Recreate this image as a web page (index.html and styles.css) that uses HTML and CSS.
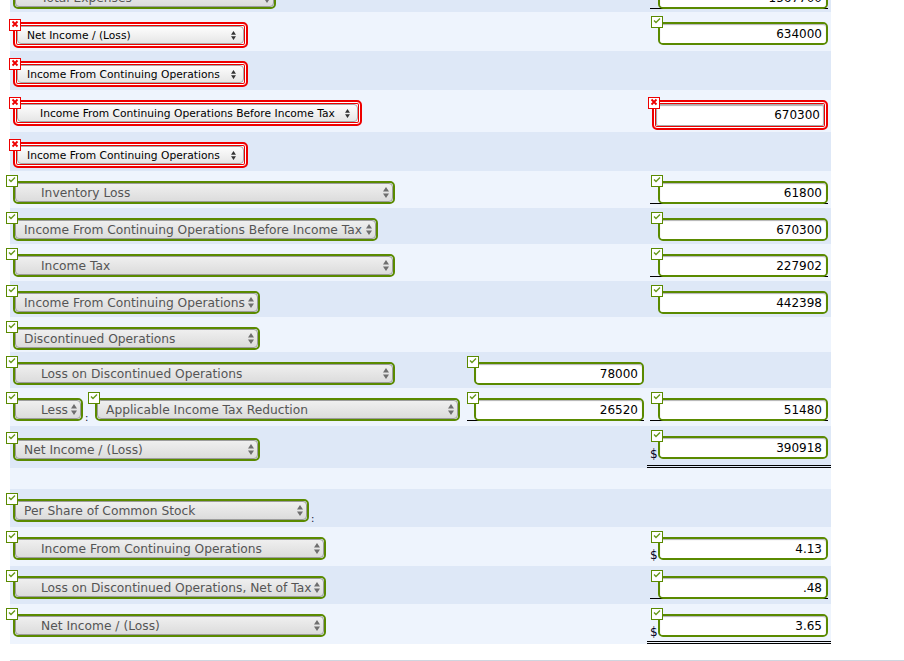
FILE: index.html
```html
<!DOCTYPE html>
<html lang="en">
<head>
    <meta charset="UTF-8">
    <meta name="viewport" content="width=device-width, initial-scale=1.0">
    <title>Income Statement</title>
    <link rel="stylesheet" href="styles.css">
</head>
<body>
    <svg class="sprite" xmlns="http://www.w3.org/2000/svg">
        <symbol id="tick" viewBox="0 0 10 10">
            <path d="M2 3.6l2 2 4-4" fill="none" stroke="#66991a" stroke-width="1.4"/>
        </symbol>
        <symbol id="cross" viewBox="0 0 10 10">
            <path d="M2.5 1.5l5 5M7.5 1.5l-5 5" fill="none" stroke="#e00" stroke-width="1.8"/>
        </symbol>
        <symbol id="arr" viewBox="0 0 6 11">
            <path d="M0 4.5L3 0l3 4.5zM0 6.5L3 11l3-4.5z"/>
        </symbol>
    </svg>

    <div class="sheet">
        <!-- cut off by the scroll -->
        <div class="row cut">
            <div class="c1">
                <span class="field ok w263"><i class="mark"><svg><use href="#tick"/></svg></i><span class="pick ind"><b>Total Expenses</b><svg class="arr"><use href="#arr"/></svg></span></span>
            </div>
            <div class="c2"></div>
            <div class="c3">
                <div class="amt line"><span class="cur"></span><span class="field ok f-num"><i class="mark"><svg><use href="#tick"/></svg></i><input class="num" value="1567700" readonly></span></div>
            </div>
        </div>

        <div class="row h39">
            <div class="c1">
                <span class="field bad f-pick w235"><i class="mark"><svg><use href="#cross"/></svg></i><span class="pick"><b>Net Income / (Loss)</b><svg class="arr"><use href="#arr"/></svg></span></span>
            </div>
            <div class="c2"></div>
            <div class="c3">
                <div class="amt"><span class="cur"></span><span class="field ok f-num"><i class="mark"><svg><use href="#tick"/></svg></i><input class="num" value="634000" readonly></span></div>
            </div>
        </div>

        <div class="row h39">
            <div class="c1">
                <span class="field bad f-pick w235"><i class="mark"><svg><use href="#cross"/></svg></i><span class="pick"><b>Income From Continuing Operations</b><svg class="arr"><use href="#arr"/></svg></span></span>
            </div>
            <div class="c2"></div>
            <div class="c3"></div>
        </div>

        <div class="row h42">
            <div class="c1">
                <span class="field bad f-pick w349"><i class="mark"><svg><use href="#cross"/></svg></i><span class="pick ind"><b>Income From Continuing Operations Before Income Tax</b><svg class="arr"><use href="#arr"/></svg></span></span>
            </div>
            <div class="c2"></div>
            <div class="c3">
                <div class="amt"><span class="field bad f-num"><i class="mark"><svg><use href="#cross"/></svg></i><input class="num" value="670300" readonly></span></div>
            </div>
        </div>

        <div class="row h39">
            <div class="c1">
                <span class="field bad f-pick w235"><i class="mark"><svg><use href="#cross"/></svg></i><span class="pick"><b>Income From Continuing Operations</b><svg class="arr"><use href="#arr"/></svg></span></span>
            </div>
            <div class="c2"></div>
            <div class="c3"></div>
        </div>

        <div class="row h37">
            <div class="c1">
                <span class="field ok w382"><i class="mark"><svg><use href="#tick"/></svg></i><span class="pick ind"><b>Inventory Loss</b><svg class="arr"><use href="#arr"/></svg></span></span>
            </div>
            <div class="c2"></div>
            <div class="c3">
                <div class="amt line"><span class="cur"></span><span class="field ok f-num"><i class="mark"><svg><use href="#tick"/></svg></i><input class="num" value="61800" readonly></span></div>
            </div>
        </div>

        <div class="row h36">
            <div class="c1">
                <span class="field ok w365"><i class="mark"><svg><use href="#tick"/></svg></i><span class="pick"><b>Income From Continuing Operations Before Income Tax</b><svg class="arr"><use href="#arr"/></svg></span></span>
            </div>
            <div class="c2"></div>
            <div class="c3">
                <div class="amt"><span class="cur"></span><span class="field ok f-num"><i class="mark"><svg><use href="#tick"/></svg></i><input class="num" value="670300" readonly></span></div>
            </div>
        </div>

        <div class="row h37">
            <div class="c1">
                <span class="field ok w382"><i class="mark"><svg><use href="#tick"/></svg></i><span class="pick ind"><b>Income Tax</b><svg class="arr"><use href="#arr"/></svg></span></span>
            </div>
            <div class="c2"></div>
            <div class="c3">
                <div class="amt line"><span class="cur"></span><span class="field ok f-num"><i class="mark"><svg><use href="#tick"/></svg></i><input class="num" value="227902" readonly></span></div>
            </div>
        </div>

        <div class="row h36">
            <div class="c1">
                <span class="field ok w247"><i class="mark"><svg><use href="#tick"/></svg></i><span class="pick"><b>Income From Continuing Operations</b><svg class="arr"><use href="#arr"/></svg></span></span>
            </div>
            <div class="c2"></div>
            <div class="c3">
                <div class="amt"><span class="cur"></span><span class="field ok f-num"><i class="mark"><svg><use href="#tick"/></svg></i><input class="num" value="442398" readonly></span></div>
            </div>
        </div>

        <div class="row h35">
            <div class="c1">
                <span class="field ok w247"><i class="mark"><svg><use href="#tick"/></svg></i><span class="pick"><b>Discontinued Operations</b><svg class="arr"><use href="#arr"/></svg></span></span>
            </div>
            <div class="c2"></div>
            <div class="c3"></div>
        </div>

        <div class="row h36">
            <div class="c1">
                <span class="field ok w382"><i class="mark"><svg><use href="#tick"/></svg></i><span class="pick ind"><b>Loss on Discontinued Operations</b><svg class="arr"><use href="#arr"/></svg></span></span>
            </div>
            <div class="c2">
                <div class="amt"><span class="cur"></span><span class="field ok f-num"><i class="mark"><svg><use href="#tick"/></svg></i><input class="num" value="78000" readonly></span></div>
            </div>
            <div class="c3"></div>
        </div>

        <div class="row h38">
            <div class="c1">
                <span class="field ok w70"><i class="mark"><svg><use href="#tick"/></svg></i><span class="pick ind"><b>Less</b><svg class="arr"><use href="#arr"/></svg></span></span>
                <span class="sep">:</span>
                <span class="field ok w365"><i class="mark"><svg><use href="#tick"/></svg></i><span class="pick"><b>Applicable Income Tax Reduction</b><svg class="arr"><use href="#arr"/></svg></span></span>
            </div>
            <div class="c2">
                <div class="amt line"><span class="cur"></span><span class="field ok f-num"><i class="mark"><svg><use href="#tick"/></svg></i><input class="num" value="26520" readonly></span></div>
            </div>
            <div class="c3">
                <div class="amt line"><span class="cur"></span><span class="field ok f-num"><i class="mark"><svg><use href="#tick"/></svg></i><input class="num" value="51480" readonly></span></div>
            </div>
        </div>

        <div class="row h42">
            <div class="c1 low">
                <span class="field ok w247"><i class="mark"><svg><use href="#tick"/></svg></i><span class="pick"><b>Net Income / (Loss)</b><svg class="arr"><use href="#arr"/></svg></span></span>
            </div>
            <div class="c2"></div>
            <div class="c3 total">
                <div class="amt"><span class="cur">$</span><span class="field ok f-num"><i class="mark"><svg><use href="#tick"/></svg></i><input class="num" value="390918" readonly></span></div>
            </div>
        </div>

        <div class="row blank"></div>

        <div class="row h38">
            <div class="c1">
                <span class="field ok w296"><i class="mark"><svg><use href="#tick"/></svg></i><span class="pick"><b>Per Share of Common Stock</b><svg class="arr"><use href="#arr"/></svg></span></span>
                <span class="sep short">:</span>
            </div>
            <div class="c2"></div>
            <div class="c3"></div>
        </div>

        <div class="row h39">
            <div class="c1">
                <span class="field ok w313"><i class="mark"><svg><use href="#tick"/></svg></i><span class="pick ind"><b>Income From Continuing Operations</b><svg class="arr"><use href="#arr"/></svg></span></span>
            </div>
            <div class="c2"></div>
            <div class="c3">
                <div class="amt"><span class="cur">$</span><span class="field ok f-num"><i class="mark"><svg><use href="#tick"/></svg></i><input class="num" value="4.13" readonly></span></div>
            </div>
        </div>

        <div class="row h38">
            <div class="c1">
                <span class="field ok w313"><i class="mark"><svg><use href="#tick"/></svg></i><span class="pick ind"><b>Loss on Discontinued Operations, Net of Tax</b><svg class="arr"><use href="#arr"/></svg></span></span>
            </div>
            <div class="c2"></div>
            <div class="c3">
                <div class="amt line"><span class="cur"></span><span class="field ok f-num"><i class="mark"><svg><use href="#tick"/></svg></i><input class="num" value=".48" readonly></span></div>
            </div>
        </div>

        <div class="row h40">
            <div class="c1">
                <span class="field ok w313"><i class="mark"><svg><use href="#tick"/></svg></i><span class="pick ind"><b>Net Income / (Loss)</b><svg class="arr"><use href="#arr"/></svg></span></span>
            </div>
            <div class="c2"></div>
            <div class="c3 total">
                <div class="amt"><span class="cur">$</span><span class="field ok f-num"><i class="mark"><svg><use href="#tick"/></svg></i><input class="num" value="3.65" readonly></span></div>
            </div>
        </div>
    </div>

    <div class="foot"></div>
</body>
</html>
```

FILE: styles.css
```css
body {
    margin: 0;
    font-family: "DejaVu Sans", Verdana, sans-serif;
    font-size: 12px;
    background-color: #fff;
}

.sprite {
    position: absolute;
    width: 0;
    height: 0;
    overflow: hidden;
}

.sheet {
    width: 831px;
}

/* statement rows: the white left border keeps the markers inside the row box */
.row {
    display: grid;
    grid-template-columns: 457px 180px 184px;
    align-items: start;
    box-sizing: border-box;
    padding-top: 10px;
    border-left: 10px solid #fff;
    background-color: #eef4fd;
    background-clip: padding-box;
}

.row:nth-child(odd) {
    background-color: #dee8f7;
}

.cut {
    height: 12px;
    padding-top: 0;
    grid-template-rows: 12px;
    align-items: end;
    overflow: hidden;
}

.cut .c1,
.cut .c3 {
    padding-bottom: 3px;
}

.blank { height: 21px; padding-top: 0; }
.h35 { height: 35px; }
.h36 { height: 36px; }
.h37 { height: 37px; }
.h38 { height: 38px; }
.h39 { height: 39px; }
.h40 { height: 40px; }
.h42 { height: 42px; }

.c1 {
    display: flex;
    align-items: flex-start;
    padding-left: 3px;
}

.c1.low {
    padding-top: 2px;
}

.c2 {
    padding-right: 3px;
}

.c3 {
    padding: 0 3px;
}

.total {
    align-self: stretch;
    box-sizing: border-box;
    border-bottom: 3px double #000;
}

.amt {
    display: flex;
    align-items: flex-end;
    justify-content: flex-end;
}

.amt.line {
    border-bottom: 1px solid #000;
}

.amt.line .field {
    margin-bottom: -1px;
}

.cur {
    width: 8px;
    line-height: 10px;
    color: #000022;
}

.c2 .cur {
    width: 7px;
}

.sep {
    align-self: flex-end;
    box-sizing: border-box;
    width: 12px;
    padding-left: 2px;
    font-size: 10px;
    line-height: 7px;
    color: #111133;
}

.sep.short {
    padding-left: 2px;
}

/* answer fields */
.field {
    position: relative;
    display: inline-flex;
    flex: none;
    box-sizing: border-box;
}

.field.ok {
    height: 23px;
    border: 2px solid #5a8a00;
    border-radius: 5px;
}

.field.bad {
    padding: 2px;
    border: 2px solid #e00;
    border-radius: 5px;
    background-color: #fff;
    box-shadow: inset 0 0 0 1px #fff, inset 0 0 0 2px #e00;
}

.f-pick { height: 26px; }
.ok.f-num { width: 170px; }
.bad.f-num { width: 176px; height: 30px; }

.w70 { width: 70px; }
.w235 { width: 235px; }
.w247 { width: 247px; }
.w263 { width: 263px; }
.w296 { width: 296px; }
.w313 { width: 313px; }
.w349 { width: 349px; }
.w365 { width: 365px; }
.w382 { width: 382px; }

/* correct / wrong marker in the top left corner */
.mark {
    position: absolute;
    z-index: 2;
    display: block;
    box-sizing: border-box;
    width: 12px;
    height: 12px;
    border: 1px solid #5a8a00;
    background-color: #fff;
}

.mark svg {
    display: block;
    width: 10px;
    height: 10px;
}

.ok .mark {
    left: -9px;
    top: -8px;
}

.bad .mark {
    left: -6px;
    top: -5px;
    border-color: #e00;
}

.pick {
    flex: 1;
    display: flex;
    align-items: center;
    min-width: 0;
    box-sizing: border-box;
    padding: 0 3px 0 8px;
    border: 1px solid #9c9c9c;
    border-radius: 4px;
    background: linear-gradient(#efefef, #dcdcdc);
    color: #555;
    font-size: 12.25px;
    white-space: nowrap;
}

.pick b {
    flex: 1;
    overflow: hidden;
    font-weight: normal;
}

.pick.ind {
    padding-left: 25px;
}

.arr {
    flex: none;
    width: 6px;
    height: 11px;
    margin-left: 2px;
    fill: #6e6e6e;
}

.bad .pick {
    padding: 0 7px 0 9px;
    border-color: #a8a8a8;
    background: linear-gradient(#fdfdfd, #e6e6e6);
    color: #000;
    font-size: 10.7px;
}

.bad .pick.ind {
    padding-left: 22px;
}

.bad .arr {
    width: 5px;
    height: 9px;
    fill: #333;
}

.num {
    flex: 1;
    min-width: 0;
    width: 100%;
    height: 100%;
    box-sizing: border-box;
    margin: 0;
    padding: 0 4px 0 0;
    border: 0;
    border-radius: 3px;
    background-color: #fff;
    box-shadow: inset 0 1px 1px rgba(0,0,0,0.3);
    font-family: "DejaVu Sans", Verdana, sans-serif;
    font-size: 12px;
    color: #000;
    text-align: right;
    outline: none;
}

.bad .num {
    padding-right: 3px;
    border: 1px solid #aaa;
    border-radius: 2px;
}

.foot {
    margin-top: 16px;
    margin-left: 10px;
    border-top: 1px solid #cfd5df;
}
```
